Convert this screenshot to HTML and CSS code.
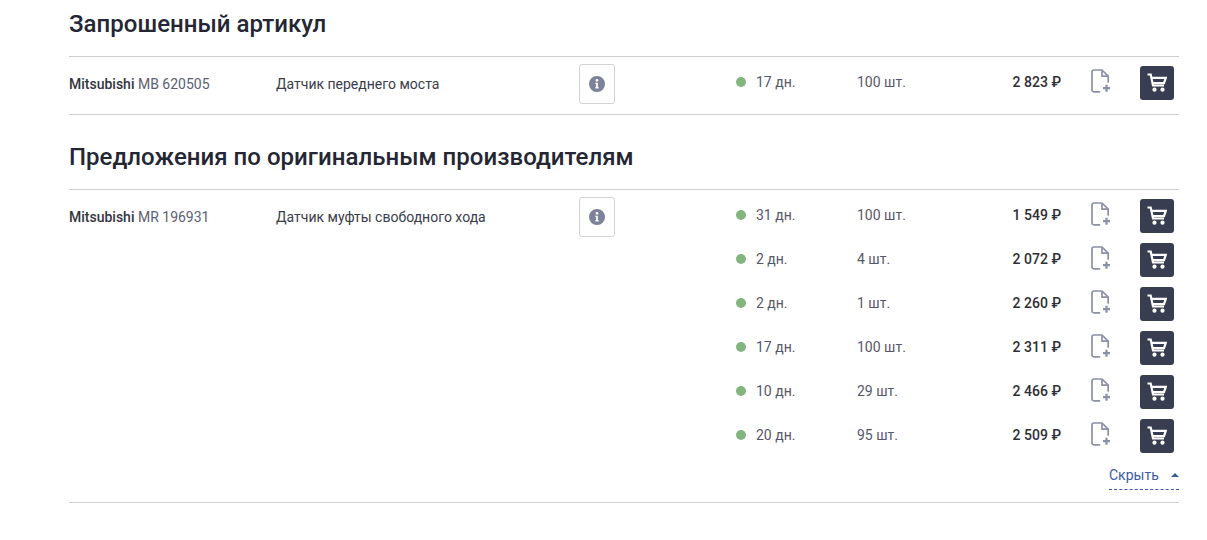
FILE: index.html
```html
<!DOCTYPE html>
<html lang="ru">
<head>
<meta charset="utf-8">
<title>Предложения</title>
<link rel="stylesheet" href="styles.css">
</head>
<body>
<svg class="defs" width="0" height="0" aria-hidden="true">
  <symbol id="doc" viewBox="0 0 20 24">
    <path d="M8.500 22.800H2.800a1.800 1.800 0 0 1-1.800-1.800V2.800A1.800 1.800 0 0 1 2.800 1h8.200l6.200 6.200V13" fill="none" stroke="currentColor" stroke-width="1.700" stroke-linecap="round" stroke-linejoin="round"/>
    <path d="M11 1.500v5.700h5.700" fill="none" stroke="currentColor" stroke-width="1.700" stroke-linejoin="round"/>
    <path d="M15.500 15.700v7M12 19.200h7" fill="none" stroke="currentColor" stroke-width="2.200"/>
  </symbol>
  <symbol id="cart" viewBox="0 0 20 20">
    <path d="M0.500 1.500h3.200l2.300 11h11" fill="none" stroke="currentColor" stroke-width="2.200"/>
    <path d="M4.500 4.800h14.300l-1.800 5.400H5.500" fill="none" stroke="currentColor" stroke-width="2.200"/>
    <circle cx="7.500" cy="16.700" r="2.100" fill="currentColor"/>
    <circle cx="15.500" cy="16.700" r="2.100" fill="currentColor"/>
  </symbol>
  <symbol id="info" viewBox="0 0 16 16">
    <path fill-rule="evenodd" d="M8 0a8 8 0 1 1 0 16A8 8 0 0 1 8 0ZM6.300 6.700v1.400h.8v3h-.8v1.500h3.400v-1.500h-.8V6.700ZM8 2.900a1.400 1.400 0 1 0 0 2.800 1.400 1.400 0 0 0 0-2.800Z" fill="currentColor"/>
  </symbol>
</svg>
<main class="page">
  <section class="first">
    <h2>Запрошенный артикул</h2>
    <div class="group">
      <div class="part"><b>Mitsubishi</b> MB 620505</div>
      <div class="desc">Датчик переднего моста</div>
      <button class="info" type="button"><svg><use href="#info"/></svg></button>
      <div class="offers">
        <div class="offer">
          <i class="dot"></i><span class="days">17 дн.</span><span class="qty">100 шт.</span><span class="price">2 823 ₽</span>
          <svg class="doc"><use href="#doc"/></svg>
          <button class="buy" type="button"><svg><use href="#cart"/></svg></button>
        </div>
      </div>
    </div>
  </section>
  <section class="second">
    <h2>Предложения по оригинальным производителям</h2>
    <div class="group last">
      <div class="part"><b>Mitsubishi</b> MR 196931</div>
      <div class="desc">Датчик муфты свободного хода</div>
      <button class="info" type="button"><svg><use href="#info"/></svg></button>
      <div class="offers">
        <div class="offer"><i class="dot"></i><span class="days">31 дн.</span><span class="qty">100 шт.</span><span class="price">1 549 ₽</span><svg class="doc"><use href="#doc"/></svg><button class="buy" type="button"><svg><use href="#cart"/></svg></button></div>
        <div class="offer"><i class="dot"></i><span class="days">2 дн.</span><span class="qty">4 шт.</span><span class="price">2 072 ₽</span><svg class="doc"><use href="#doc"/></svg><button class="buy" type="button"><svg><use href="#cart"/></svg></button></div>
        <div class="offer"><i class="dot"></i><span class="days">2 дн.</span><span class="qty">1 шт.</span><span class="price">2 260 ₽</span><svg class="doc"><use href="#doc"/></svg><button class="buy" type="button"><svg><use href="#cart"/></svg></button></div>
        <div class="offer"><i class="dot"></i><span class="days">17 дн.</span><span class="qty">100 шт.</span><span class="price">2 311 ₽</span><svg class="doc"><use href="#doc"/></svg><button class="buy" type="button"><svg><use href="#cart"/></svg></button></div>
        <div class="offer"><i class="dot"></i><span class="days">10 дн.</span><span class="qty">29 шт.</span><span class="price">2 466 ₽</span><svg class="doc"><use href="#doc"/></svg><button class="buy" type="button"><svg><use href="#cart"/></svg></button></div>
        <div class="offer"><i class="dot"></i><span class="days">20 дн.</span><span class="qty">95 шт.</span><span class="price">2 509 ₽</span><svg class="doc"><use href="#doc"/></svg><button class="buy" type="button"><svg><use href="#cart"/></svg></button></div>
        <div class="more"><a class="toggle" href="#">Скрыть<i class="caret"></i></a></div>
      </div>
    </div>
  </section>
</main>
</body>
</html>
```
FILE: styles.css
```css
* { box-sizing: border-box; }
html, body { margin: 0; padding: 0; background: #fff; }
body { font-family: Roboto, "Noto Sans", sans-serif; font-size: 14px; color: #2b2d3a; }
.defs { position: absolute; }
.page { width: 1110px; margin-left: 69px; }
h2 { margin: 0; font-size: 24px; font-weight: 500; line-height: 28px; letter-spacing: 0.03px; color: #242633; }
.first h2 { padding-top: 10px; height: 56px; }
.second h2 { padding-top: 28px; height: 74px; }
.group { display: flex; align-items: flex-start; border-top: 1px solid #cfcfcf; border-bottom: 1px solid #cfcfcf; height: 59px; padding-top: 3px; }
.group.last { height: 314px; }
.part { width: 207px; padding-top: 16px; line-height: 17px; color: #5d6070; }
.part b { font-weight: 500; color: #33353f; }
.desc { width: 303px; padding-top: 16px; line-height: 17px; color: #3a3c48; }
.info { width: 36px; height: 40px; padding: 0; margin-top: 4px; background: #fff; border: 1px solid #d2d3d6; border-radius: 3px; display: flex; align-items: center; justify-content: center; color: #7c8299; }
.info svg { width: 16px; height: 16px; }
.offers { margin-left: 121px; margin-top: 1px; width: 443px; }
.offer { display: flex; align-items: center; height: 44px; }
.dot { width: 10px; height: 10px; border-radius: 50%; background: #83b67e; margin-right: 10px; margin-top: -3px; }
.days { width: 101px; color: #55586a; margin-top: -2px; }
.qty { width: 95px; color: #55586a; margin-top: -2px; }
.price { width: 109px; text-align: right; font-weight: 500; color: #2c2e38; margin-top: -2px; white-space: nowrap; }
.doc { width: 20px; height: 24px; margin-left: 30px; margin-right: 29px; color: #8b90a4; margin-top: -4px; }
.buy { width: 34px; height: 34px; padding: 0; border: 0; border-radius: 3px; background: #393d52; color: #fff; display: flex; align-items: center; justify-content: center; }
.buy svg { width: 20px; height: 20px; }
.more { display: flex; justify-content: flex-end; padding: 2px 0 0; }
.toggle { display: flex; align-items: center; width: 70px; height: 30px; padding-top: 1px; color: #3b5ba5; text-decoration: none; border-bottom: 1px dashed #3b5ba5; }
.caret { width: 0; height: 0; margin-left: 12px; border-left: 4px solid transparent; border-right: 4px solid transparent; border-bottom: 4px solid #3b5ba5; }
```
